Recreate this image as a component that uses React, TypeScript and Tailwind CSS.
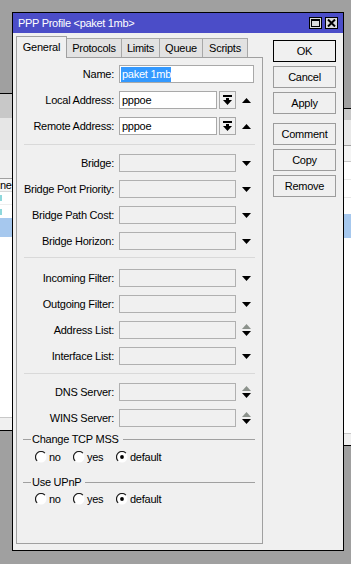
import React from 'react';

type Kind = 'name' | 'combo' | 'down' | 'updown';

const TriDown = () => (
  <svg width="9" height="5" viewBox="0 0 9 5">
    <polygon points="0,0 9,0 4.5,5" fill="#000" />
  </svg>
);

const TriUp = () => (
  <svg width="9" height="5" viewBox="0 0 9 5">
    <polygon points="0,5 9,5 4.5,0" fill="#000" />
  </svg>
);

const TriUpDown = () => (
  <svg width="9" height="12" viewBox="0 0 9 12">
    <polygon points="0,5 9,5 4.5,0" fill="#8c928c" />
    <polygon points="0,7 9,7 4.5,12" fill="#000" />
  </svg>
);

// drop-down button glyph: bar, stem, arrow
const DropIcon = () => (
  <svg width="9" height="10" viewBox="0 0 9 10">
    <rect x="0" y="0" width="9" height="2" fill="#000" />
    <rect x="3" y="3" width="3" height="2" fill="#000" />
    <polygon points="0,5 9,5 4.5,10" fill="#000" />
  </svg>
);

const Field = ({ label, kind, value }: { label: string; kind: Kind; value?: string }) => (
  <div className="flex h-[18px] items-center">
    <div className="w-[97px] shrink-0 text-right">{label}</div>
    <div className="ml-[5px] flex items-center">
      {kind === 'name' && (
        <div className="flex h-[18px] w-[135px] items-center border border-[#a9a9a9] bg-white pl-[1px]">
          <span className="h-[15px] bg-[#3399ff] pl-[1px] leading-[15px] text-white">paket 1mb</span>
        </div>
      )}
      {kind === 'combo' && (
        <>
          <div className="h-[18px] w-[98px] border border-[#a9a9a9] bg-white pl-[2px] leading-[16px]">{value}</div>
          <div className="ml-[2px] flex h-[18px] w-[17px] items-center justify-center border border-[#a9a9a9] bg-[#f0f0f0]">
            <DropIcon />
          </div>
          <div className="ml-[6px] flex">
            <TriUp />
          </div>
        </>
      )}
      {(kind === 'down' || kind === 'updown') && (
        <>
          <div className="h-[18px] w-[117px] border border-[#b0b0b0] bg-[#f0f0f0]" />
          <div className="ml-[6px] flex">{kind === 'down' ? <TriDown /> : <TriUpDown />}</div>
        </>
      )}
    </div>
  </div>
);

const Sep = ({ className }: { className: string }) => (
  <div className={`ml-[7px] mr-[7px] h-px bg-[#d9d9d9] ${className}`} />
);

const Group = ({ title, className }: { title: string; className: string }) => (
  <div className={`ml-[6px] mr-[7px] flex h-[14px] items-center ${className}`}>
    <div className="h-px w-[8px] bg-[#a0a0a0]" />
    <span className="pl-[1px] pr-[4px]">{title}</span>
    <div className="h-px flex-1 bg-[#a0a0a0]" />
  </div>
);

const Radio = ({ label, checked, w }: { label: string; checked?: boolean; w: string }) => (
  <div className={`flex items-center ${w}`}>
    <svg width="12" height="12" viewBox="0 0 12 12">
      <circle cx="6" cy="6" r="5.5" fill="#fff" />
      <path d="M2.1 9.9A5.5 5.5 0 0 1 9.9 2.1" stroke="#1a1a1a" strokeWidth="1.2" fill="none" />
      {checked && <circle cx="6" cy="6" r="1.9" fill="#000" />}
    </svg>
    <span className="ml-[2px]">{label}</span>
  </div>
);

const Radios = ({ className }: { className: string }) => (
  <div className={`ml-[18px] flex h-[14px] items-center ${className}`}>
    <Radio label="no" w="w-[38px]" />
    <Radio label="yes" w="w-[43px]" />
    <Radio label="default" checked w="w-[60px]" />
  </div>
);

const Btn = ({ children, def, className = '' }: { children: React.ReactNode; def?: boolean; className?: string }) => (
  <div
    className={`flex h-[22px] w-[63px] items-center justify-center border bg-[#f0f0f0] ${
      def ? 'border-black' : 'border-[#9c9c9c]'
    } ${className}`}
  >
    {children}
  </div>
);

const tabs = [
  { name: 'Protocols', w: 'w-[55px]' },
  { name: 'Limits', w: 'w-[38px]' },
  { name: 'Queue', w: 'w-[43px]' },
  { name: 'Scripts', w: 'w-[45px]' },
];

export default function App() {
  return (
    <div className="relative h-[564px] w-[351px] overflow-hidden bg-[#a0a0a0] font-['Liberation_Sans',Arial,sans-serif] text-[11px] tracking-[-0.25px] text-black">
      {/* list window behind, left edge */}
      <div className="absolute left-0 top-[93px] flex h-[338px] w-[60px] flex-col border-y border-black bg-white">
        <div className="h-[24px] bg-[#c8c8c8]" />
        <div className="h-[32px] bg-[#e6e6e6]" />
        <div className="h-[29px] border-b border-[#a0a0a0] bg-[#efefef]" />
        <div className="h-[13px] border-b border-[#d8d8d8] bg-[#f5f5f5] leading-[12px]">ne</div>
        <div className="flex h-[13px] items-center border-b border-[#eeeeee]">
          <div className="h-[6px] w-[2px] bg-[#8fd8dc]" />
        </div>
        <div className="flex h-[13px] items-center">
          <div className="h-[6px] w-[2px] bg-[#8fd8dc]" />
        </div>
        <div className="h-[19px] bg-[#a6c8ee]" />
        <div className="flex-1" />
        <div className="h-[13px] border-t border-[#c8c8c8] bg-[#f0f0f0]" />
      </div>

      {/* list window behind, right edge */}
      <div className="absolute left-[330px] top-[108px] flex h-[338px] w-[30px] flex-col border-y border-black bg-white">
        <div className="h-[11px] bg-[#c8c8c8]" />
        <div className="h-[26px] border-b border-[#a0a0a0] bg-[#e8e8e8]" />
        <div className="h-[16px] border-b border-[#c8c8c8] bg-[#f4f4f4]" />
        <div className="h-[18px] border-b border-[#e8e8e8]" />
        <div className="h-[18px] border-b border-[#e8e8e8]" />
        <div className="h-[16px]" />
        <div className="h-[24px] bg-[#a6c8ee]" />
        <div className="flex-1" />
        <div className="h-[12px] border-t border-[#c8c8c8] bg-[#f0f0f0]" />
      </div>

      {/* PPP Profile dialog */}
      <div className="absolute left-[12px] top-[12px] z-10 flex h-[539px] w-[332px] flex-col border border-black bg-[#f0f0f0]">
        <div className="flex h-[20px] shrink-0 items-center bg-[#4b4dc8] pl-[5px] pr-[5px] text-white">
          <span className="flex-1 tracking-[-0.3px]">PPP Profile &lt;paket 1mb&gt;</span>
          <div className="mr-[3px] flex h-[12px] w-[13px] items-center justify-center border border-black bg-[#dcdcdc]">
            <div className="h-[8px] w-[9px] border border-t-2 border-black" />
          </div>
          <div className="flex h-[12px] w-[13px] items-center justify-center border border-black bg-[#dcdcdc]">
            <svg width="9" height="8" viewBox="0 0 9 8">
              <path d="M1 0.5L8 7.5M8 0.5L1 7.5" stroke="#000" strokeWidth="2" />
            </svg>
          </div>
        </div>

        <div className="flex flex-1">
          <div className="ml-[3px] flex w-[247px] flex-col pb-[6px] pt-[3px]">
            <div className="flex h-[22px] items-start">
              <div className="relative z-10 flex h-[22px] w-[51px] items-center justify-center border border-b-0 border-[#a0a0a0] bg-[#f0f0f0] pb-[1px]">
                General
              </div>
              {tabs.map((t) => (
                <div
                  key={t.name}
                  className={`mt-[2px] flex h-[19px] items-center justify-center border border-b-0 border-l-0 border-[#a8a8a8] bg-[#e2e2e2] ${t.w}`}
                >
                  {t.name}
                </div>
              ))}
            </div>

            <div className="-mt-px flex flex-1 flex-col border border-[#a0a0a0] bg-[#f0f0f0]">
              <div className="flex flex-col gap-[8px] pt-[7px]">
                <Field label="Name:" kind="name" />
                <Field label="Local Address:" kind="combo" value="pppoe" />
                <Field label="Remote Address:" kind="combo" value="pppoe" />
              </div>
              <Sep className="mt-[9px]" />
              <div className="mt-[9px] flex flex-col gap-[8px]">
                <Field label="Bridge:" kind="down" />
                <Field label="Bridge Port Priority:" kind="down" />
                <Field label="Bridge Path Cost:" kind="down" />
                <Field label="Bridge Horizon:" kind="down" />
              </div>
              <Sep className="mt-[7px]" />
              <div className="mt-[11px] flex flex-col gap-[8px]">
                <Field label="Incoming Filter:" kind="down" />
                <Field label="Outgoing Filter:" kind="down" />
                <Field label="Address List:" kind="updown" />
                <Field label="Interface List:" kind="down" />
              </div>
              <Sep className="mt-[8px]" />
              <div className="mt-[9px] flex flex-col gap-[8px]">
                <Field label="DNS Server:" kind="updown" />
                <Field label="WINS Server:" kind="updown" />
              </div>
              <Group title="Change TCP MSS" className="mt-[5px]" />
              <Radios className="mt-[4px]" />
              <Group title="Use UPnP" className="mt-[11px]" />
              <Radios className="mt-[3px]" />
            </div>
          </div>

          <div className="ml-[10px] flex flex-col pt-[7px]">
            <Btn def>OK</Btn>
            <Btn className="mt-[4px]">Cancel</Btn>
            <Btn className="mt-[4px]">Apply</Btn>
            <Btn className="mt-[9px]">Comment</Btn>
            <Btn className="mt-[4px]">Copy</Btn>
            <Btn className="mt-[4px]">Remove</Btn>
          </div>
        </div>
      </div>
    </div>
  );
}
